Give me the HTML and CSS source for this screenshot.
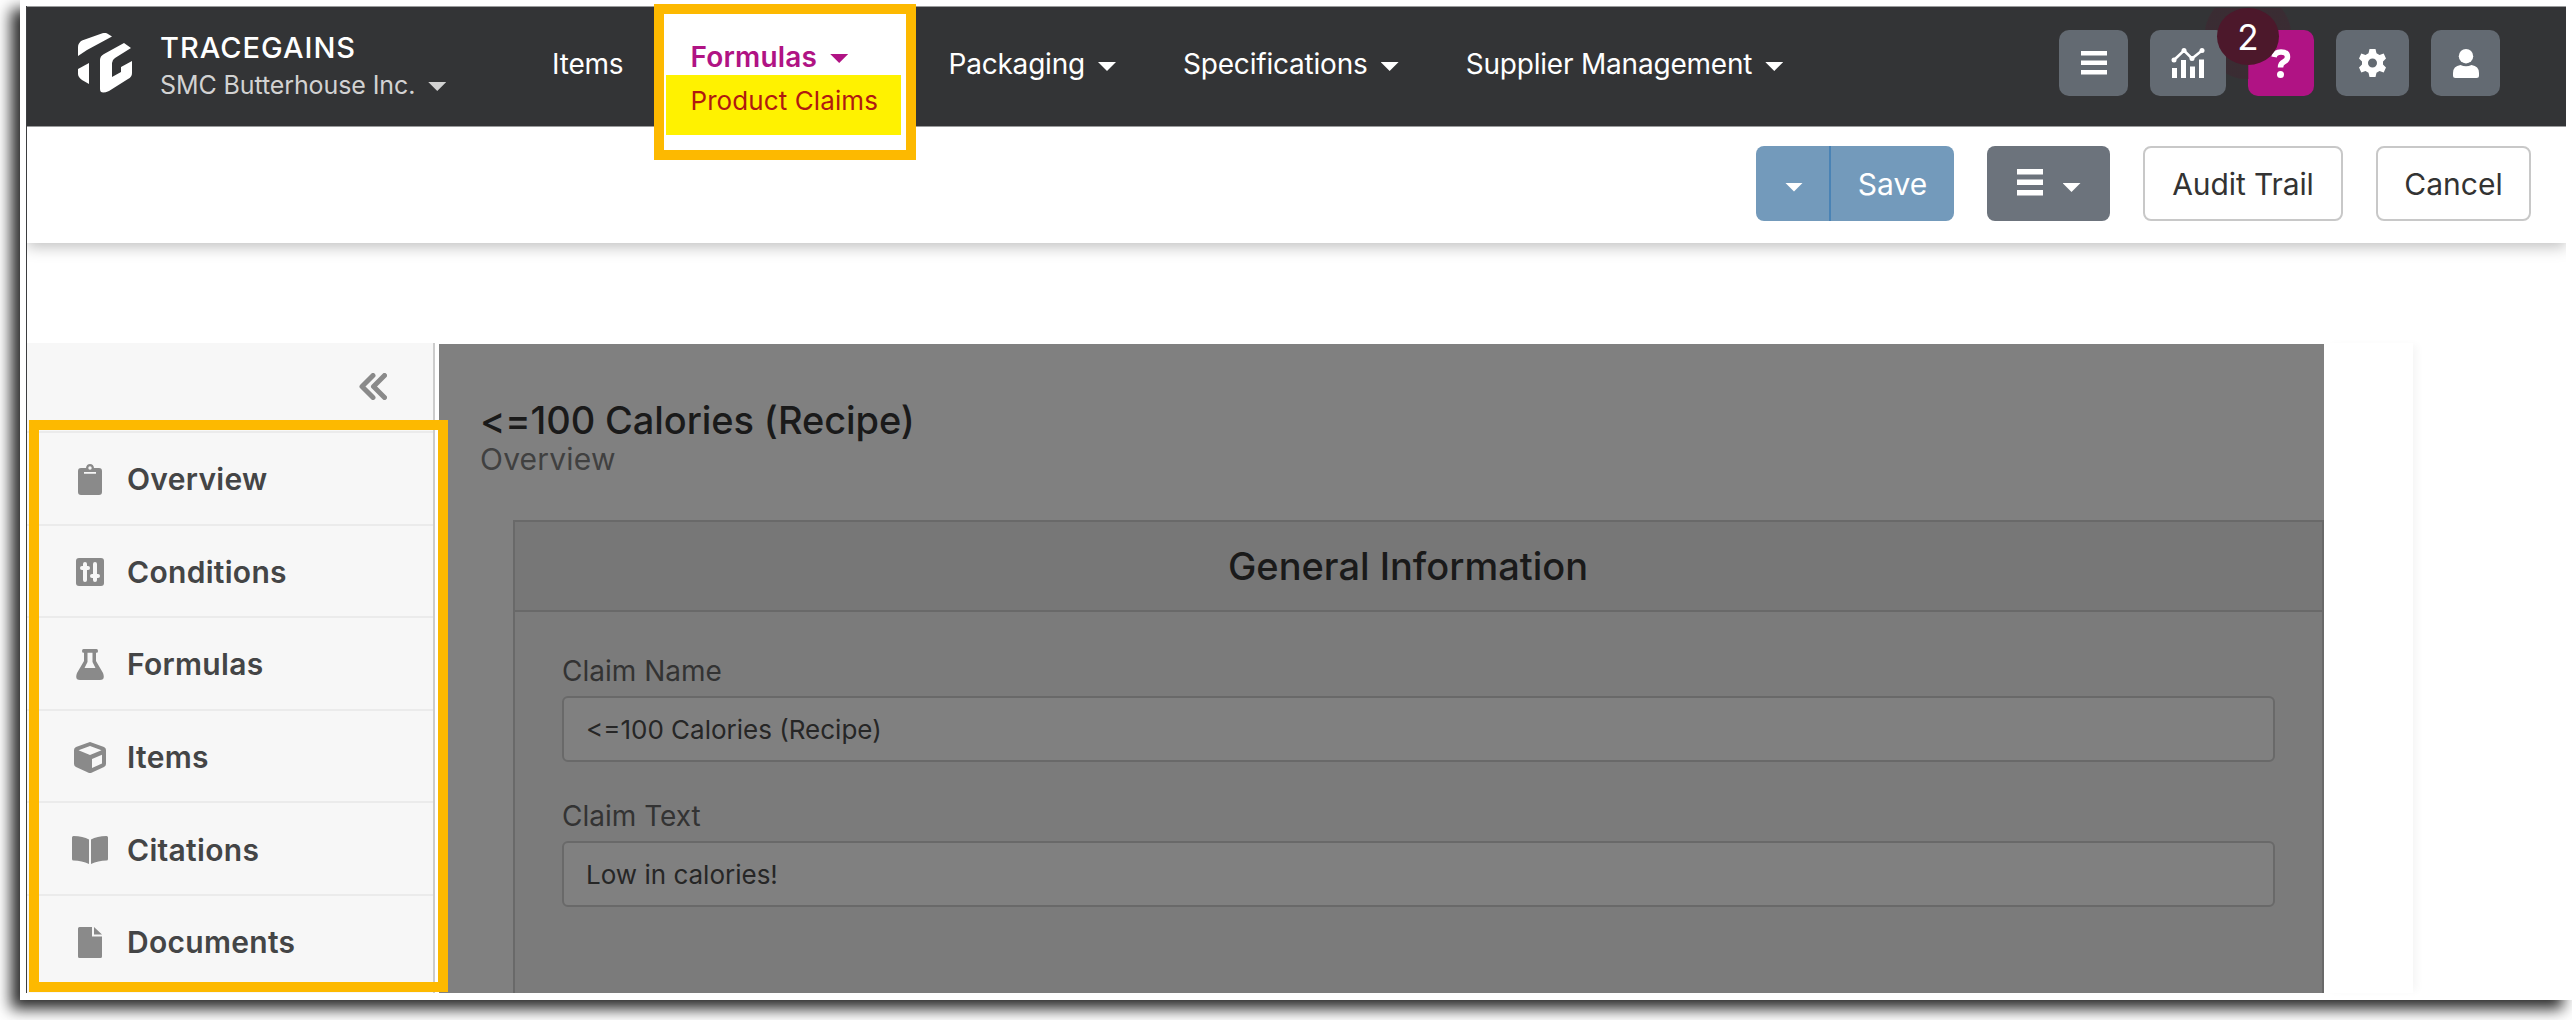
FILE: index.html
```html
<!DOCTYPE html>
<html lang="en">
<head>
    <meta charset="UTF-8">
    <meta name="viewport" content="width=device-width, initial-scale=1.0">
    <title>TraceGains - Product Claims</title>
    <link rel="stylesheet" href="styles.css">
</head>
<body>
    <div class="frame">
        <div class="app">
            <header class="topbar">
                <svg class="logo" viewBox="0 0 54 60">
                    <path d="M0 14 Q0 10 4 7.500L23 0.800Q27 -1 30 1L34 3.500L9 17L0 23Z"/>
                    <path d="M0 36L11 30V51L4 47Q0 44 0 41Z"/>
                    <path d="M22 27Q22 23 26 21L46 10L53 15L37 25Q34 27 34 30V44L43 39V34L54 28V40Q54 44 50 46L31 58Q22 62 22 56Z"/>
                </svg>
                <div class="brand">
                    <div class="brand-name">TRACEGAINS</div>
                    <div class="brand-company">SMC Butterhouse Inc.<i class="caret"></i></div>
                </div>
                <nav class="nav">
                    <div class="nav-item">Items</div>
                    <div class="nav-item nav-formulas">
                        <div class="menu">
                            <div class="menu-title">Formulas<i class="caret"></i></div>
                            <div class="menu-link">Product Claims</div>
                        </div>
                    </div>
                    <div class="nav-item">Packaging<i class="caret"></i></div>
                    <div class="nav-item">Specifications<i class="caret"></i></div>
                    <div class="nav-item">Supplier Management<i class="caret"></i></div>
                </nav>
                <div class="tools">
                    <div class="tool tool-list"><svg width="26" height="24" viewBox="0 0 26 24"><path d="M0 0h26v4.500H0zM0 9.500h26V14H0zM0 19h26v4.500H0z"/></svg></div>
                    <div class="tool tool-chart"><svg width="34" height="30" viewBox="0 0 34 30"><path d="M1 20h5v10H1zM10 12h5v18h-5zM19 18.500h5V30h-5zM28 11.500h5V30h-5z"/><path class="line" d="M3 12L13 2.500L21 10.500L31 2.500"/><circle cx="3" cy="12" r="2.500"/><circle cx="13" cy="2.500" r="2.500"/><circle cx="21" cy="10.500" r="2.500"/><circle cx="31" cy="2.500" r="2.500"/></svg></div>
                    <div class="tool tool-help"><svg width="20" height="29" viewBox="0 0 20 29"><path class="mark" d="M3 8Q4 3 10 3Q16.500 3 16.500 8Q16.500 11 13 12.800Q9.500 14.500 9.500 18.500"/><circle cx="9.500" cy="25.500" r="3.500"/></svg></div>
                    <div class="tool tool-gear"><svg width="27" height="28" viewBox="0 0 27 28"><path fill-rule="evenodd" d="M10.500 0h6l1 4.200l3 1.700l4.200-1.400l2.300 5l-3 3v3l3 3l-2.300 5l-4.200-1.400l-3 1.700l-1 4.200h-6l-1-4.200l-3-1.700l-4.200 1.400l-2.300-5l3-3v-3l-3-3l2.300-5l4.200 1.400l3-1.700zM13.500 9.500a4.500 4.500 0 1 0 0 9a4.500 4.500 0 1 0 0-9z"/></svg></div>
                    <div class="tool tool-user"><svg width="26" height="29" viewBox="0 0 26 29"><circle cx="13" cy="7.200" r="7.200"/><path d="M7.500 16Q13 18.500 18.500 16Q26 17 26 24v2.500Q26 29 23.500 29h-21Q0 29 0 26.500V24Q0 17 7.500 16z"/></svg></div>
                    <span class="halo"></span>
                    <span class="badge">2</span>
                </div>
            </header>

            <div class="toolbar">
                <div class="btn-group">
                    <div class="btn-drop"><i class="caret"></i></div>
                    <div class="btn-save">Save</div>
                </div>
                <div class="btn btn-menu"><svg width="26" height="27" viewBox="0 0 26 27"><path d="M0 0h26v5.500H0zM0 10.500h26V16H0zM0 21h26v5.500H0z"/></svg><i class="caret"></i></div>
                <div class="btn btn-audit">Audit Trail</div>
                <div class="btn btn-cancel">Cancel</div>
            </div>

            <div class="content">
                <aside class="sidebar">
                    <div class="collapse"><svg width="28" height="27" viewBox="0 0 28 27"><path d="M14 2.500L3 13.500L14 24.500M25.500 2.500L14.500 13.500L25.500 24.500"/></svg></div>
                    <div class="side-item"><div class="side-icon"><svg width="24" height="31" viewBox="0 0 24 31"><path fill-rule="evenodd" d="M3 4H8Q8.500 0 12 0T16 4H21Q24 4 24 7V28Q24 31 21 31H3Q0 31 0 28V7Q0 4 3 4zM12 2.300a1.700 1.700 0 1 0 0 3.400a1.700 1.700 0 1 0 0-3.400zM6 8V9.800H18V8z"/></svg></div>Overview</div>
                    <div class="side-item"><div class="side-icon"><svg width="28" height="28" viewBox="0 0 28 28"><rect width="28" height="28" rx="3"/><path class="cut" d="M9 6v16M6 10H12M19 6v16M16 18H22"/></svg></div>Conditions</div>
                    <div class="side-item"><div class="side-icon"><svg width="28" height="31" viewBox="0 0 28 31"><path fill-rule="evenodd" d="M7.500 0H20.500Q22 0 22 1.900T20.500 3.800H20V12L27 24Q29.500 31 24 31H4Q-1.500 31 1 24L8 12V3.800H7.500Q6 3.800 6 1.900T7.500 0zM11.500 3.800V13L8.500 19H19.500L16.500 13V3.800z"/></svg></div>Formulas</div>
                    <div class="side-item"><div class="side-icon"><svg width="32" height="31" viewBox="0 0 32 31"><path fill-rule="evenodd" d="M14.500 0.400Q16 -0.200 17.500 0.400L30 5Q32 6 32 8V22Q32 24 30 25L18 30.500Q16 31.500 14 30.500L2 25Q0 24 0 22V8Q0 6 2 5zM16 4L4.500 8.300L16 13L27.500 8.300zM18 17V26L28 21.500V12.800z"/></svg></div>Items</div>
                    <div class="side-item"><div class="side-icon"><svg width="36" height="28" viewBox="0 0 36 28"><path d="M17 3.500V28Q10 24.500 1.500 24.500Q0 24.500 0 23V1.500Q0 0 1.500 0Q11 0 17 3.500zM19 3.500V28Q26 24.500 34.500 24.500Q36 24.500 36 23V1.500Q36 0 34.500 0Q25 0 19 3.500z"/></svg></div>Citations</div>
                    <div class="side-item"><div class="side-icon"><svg width="24" height="31" viewBox="0 0 24 31"><path d="M1.500 0H14V9.500H24V29.500Q24 31 22.500 31H1.500Q0 31 0 29.500V1.500Q0 0 1.500 0zM16 0L24 7.500H16z"/></svg></div>Documents</div>
                </aside>
                <main class="main">
                    <h1>&lt;=100 Calories (Recipe)</h1>
                    <h2>Overview</h2>
                    <section class="card">
                        <div class="card-header">General Information</div>
                        <div class="card-body">
                            <div class="label">Claim Name</div>
                            <div class="input">&lt;=100 Calories (Recipe)</div>
                            <div class="label">Claim Text</div>
                            <div class="input">Low in calories!</div>
                        </div>
                    </section>
                </main>
                <div class="page-edge"></div>
            </div>
            <div class="marker marker-menu"></div>
            <div class="marker marker-side"></div>
        </div>
    </div>
</body>
</html>
```
FILE: styles.css
```css
* {
    box-sizing: border-box;
}

body {
    margin: 0;
    height: 1020px;
    overflow: hidden;
    background-color: #ffffff;
    color: #333333;
    font-family: Inter, "Liberation Sans", sans-serif;
    font-size: 28px;
    white-space: nowrap;
}

svg {
    display: block;
    fill: #ffffff;
}

.frame {
    height: 1000px;
    margin-left: 20px;
    padding: 6px 6px 7px;
    background-color: #ffffff;
    box-shadow: -9px 9px 14px #2b2b2b;
}

.app {
    position: relative;
    height: 987px;
    border-left: 1px solid #3d3e40;
}

.caret {
    width: 18px;
    height: 9px;
    margin-left: 13px;
    background-color: currentColor;
    clip-path: polygon(0 0, 100% 0, 50% 100%);
}

.topbar {
    display: flex;
    height: 121px;
    background-color: #333436;
    border-top: 1px solid #9a9b9c;
    border-bottom: 1px solid #9a9b9c;
    color: #ffffff;
}

.logo {
    flex: none;
    width: 54px;
    height: 60px;
    margin: 26px 0 0 51px;
}

.brand {
    width: 392px;
    margin-left: 28px;
    padding-top: 24px;
}

.brand-name {
    height: 35px;
    line-height: 34px;
    font-size: 29px;
    font-weight: 500;
    letter-spacing: 1px;
}

.brand-company {
    display: flex;
    align-items: center;
    height: 38px;
    font-size: 25px;
    letter-spacing: -0.1px;
    color: #d2d2d2;
}

.brand-company .caret {
    margin-top: 3px;
}

.nav {
    display: flex;
    height: 114px;
    letter-spacing: -0.2px;
}

.nav-item {
    display: flex;
    align-items: center;
    margin-right: 67px;
}

.nav-item > .caret {
    margin-top: 5px;
}

.nav-formulas {
    position: relative;
    width: 191px;
}

.menu {
    position: absolute;
    left: -27px;
    top: 6px;
    width: 245px;
    height: 139px;
    padding: 14px 3px 0;
    background-color: #ffffff;
    z-index: 1;
}

.menu-title {
    display: flex;
    align-items: center;
    height: 48px;
    padding: 11px 0 0 24px;
    color: #b01384;
    font-weight: 600;
    letter-spacing: 0.2px;
}

.menu-title .caret {
    margin-top: 4px;
}

.menu-link {
    width: 235px;
    height: 60px;
    padding-left: 24px;
    background-color: #fff200;
    color: #b01a10;
    font-size: 26px;
    line-height: 52px;
    letter-spacing: 0.1px;
}

.tools {
    position: relative;
    display: flex;
    gap: 22px;
    margin: 23px 66px 0 auto;
}

.tool {
    display: flex;
    align-items: center;
    justify-content: center;
    height: 66px;
    width: 69px;
    border-radius: 10px;
    background-color: #636a72;
}

.tool-chart {
    width: 76px;
}

.tool-help {
    width: 66px;
    background-color: #b01384;
}

.tool-gear {
    width: 73px;
}

.line {
    fill: none;
    stroke: #ffffff;
    stroke-width: 2.5;
}

.mark {
    fill: none;
    stroke: #ffffff;
    stroke-width: 5.5;
}

.badge {
    position: absolute;
    left: 158px;
    top: -22px;
    width: 62px;
    height: 57px;
    border-radius: 50%;
    background-color: #4c182b;
    font-size: 35px;
    line-height: 58px;
    text-align: center;
}

/* faint pulse ring round the badge, seen only between the buttons */
.halo {
    position: absolute;
    left: 145px;
    top: -22px;
    width: 89px;
    height: 71px;
    background: radial-gradient(circle 44px at 44px 28px, rgba(76, 24, 43, 0.28) 97%, transparent);
    clip-path: polygon(0 0, 100% 0, 100% 22px, 45px 22px, 45px 100%, 22px 100%, 22px 22px, 0 22px);
}

.toolbar {
    display: flex;
    justify-content: flex-end;
    height: 116px;
    padding: 19px 35px 0 0;
    background-color: #ffffff;
    box-shadow: 0 4px 14px rgba(0, 0, 0, 0.25);
    clip-path: inset(0 0 -24px 0);
    font-size: 30px;
}

.btn-group {
    display: flex;
    width: 198px;
    height: 75px;
    border-radius: 8px;
    background-color: #739abb;
    color: #ffffff;
}

.btn-drop {
    display: flex;
    align-items: center;
    width: 75px;
    border-right: 2px solid #4a83b5;
    padding: 7px 0 0 16px;
}

.btn-save {
    flex: 1;
    line-height: 77px;
    text-align: center;
}

.btn {
    display: flex;
    align-items: center;
    justify-content: center;
    height: 75px;
    margin-left: 33px;
    padding-top: 1px;
    border: 2px solid #c8c8c8;
    border-radius: 8px;
}

.btn-menu {
    width: 123px;
    border: none;
    background-color: #6c737c;
    color: #ffffff;
    gap: 7px;
}

.btn-menu svg {
    margin-top: -4px;
}

.btn-menu .caret {
    margin-top: 7px;
}

.btn-audit {
    width: 200px;
    letter-spacing: -0.1px;
}

.btn-cancel {
    width: 155px;
}

.content {
    display: flex;
    height: 650px;
    margin-top: 100px;
}

.sidebar {
    width: 408px;
    height: 650px;
    overflow: hidden;
    background-color: #f7f7f7;
    border-right: 2px solid #cccccc;
}

.collapse {
    display: flex;
    justify-content: flex-end;
    height: 88px;
    padding: 30px 46px 0 0;
}

.collapse path {
    fill: none;
    stroke: #8a8a8a;
    stroke-width: 5;
    stroke-linecap: round;
    stroke-linejoin: round;
}

.side-item {
    display: flex;
    align-items: center;
    height: 92.6px;
    padding-top: 2px;
    border-top: 2px solid #ebebeb;
    color: #444546;
    font-size: 30px;
    font-weight: 600;
    letter-spacing: 0.3px;
}

.side-icon {
    display: flex;
    justify-content: center;
    width: 125px;
    margin-right: -25px;
}

.side-icon svg {
    fill: #8a8a8a;
}

.side-icon .cut {
    fill: none;
    stroke: #f7f7f7;
    stroke-width: 4;
    stroke-linecap: round;
}

.main {
    width: 1885px;
    height: 649px;
    margin: 1px 0 0 4px;
    padding: 51px 0 0 41px;
    overflow: hidden;
    background-color: #808080;
}

h1 {
    margin: 0;
    height: 46px;
    line-height: 50px;
    font-size: 38px;
    font-weight: 500;
    letter-spacing: -0.1px;
    color: #1a1a1a;
}

h2 {
    margin: 0;
    height: 79px;
    line-height: 36px;
    font-size: 30px;
    font-weight: 400;
    letter-spacing: 0.2px;
    color: #404040;
}

.card {
    height: 500px;
    margin-left: 33px;
    border: 2px solid #696969;
    background-color: #7b7b7b;
}

.card-header {
    height: 90px;
    padding-right: 21px;
    border-bottom: 2px solid #696969;
    background-color: #777777;
    color: #1a1a1a;
    font-size: 38px;
    font-weight: 500;
    line-height: 89px;
    text-align: center;
}

.card-body {
    padding: 33px 47px 0;
}

.label {
    height: 51px;
    line-height: 53px;
    color: #333333;
}

.input {
    height: 66px;
    margin-bottom: 28px;
    padding-left: 22px;
    border: 2px solid #696969;
    border-radius: 6px;
    background-color: #808080;
    color: #262626;
    font-size: 26px;
    line-height: 63px;
}

.page-edge {
    width: 89px;
    background-color: #ffffff;
    box-shadow: 6px 0 8px -2px rgba(0, 0, 0, 0.04);
}

/* callout boxes drawn over the page */
.marker {
    position: absolute;
    border: 10px solid #fdb900;
    z-index: 2;
}

.marker-menu {
    left: 627px;
    top: -2px;
    width: 262px;
    height: 156px;
}

.marker-side {
    left: 2px;
    top: 414px;
    width: 419px;
    height: 572px;
}
```
